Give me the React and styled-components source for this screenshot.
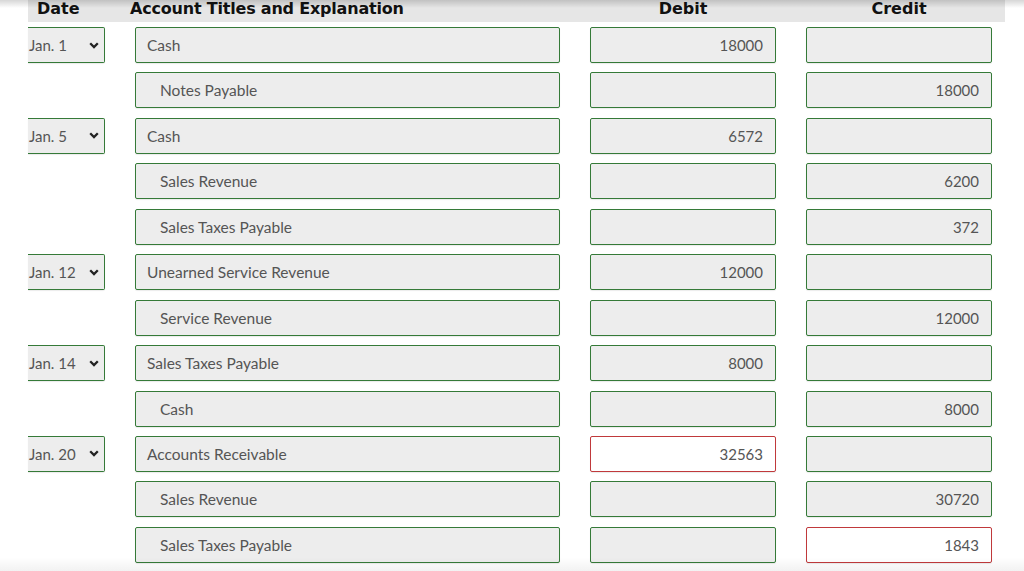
import React from "react";
import styled, { createGlobalStyle } from "styled-components";

const entries = [
  { date: "Jan. 1", lines: [
    { account: "Cash", debit: "18000", credit: "" },
    { account: "Notes Payable", indent: true, debit: "", credit: "18000" },
  ] },
  { date: "Jan. 5", lines: [
    { account: "Cash", debit: "6572", credit: "" },
    { account: "Sales Revenue", indent: true, debit: "", credit: "6200" },
    { account: "Sales Taxes Payable", indent: true, debit: "", credit: "372" },
  ] },
  { date: "Jan. 12", lines: [
    { account: "Unearned Service Revenue", debit: "12000", credit: "" },
    { account: "Service Revenue", indent: true, debit: "", credit: "12000" },
  ] },
  { date: "Jan. 14", lines: [
    { account: "Sales Taxes Payable", debit: "8000", credit: "" },
    { account: "Cash", indent: true, debit: "", credit: "8000" },
  ] },
  { date: "Jan. 20", lines: [
    { account: "Accounts Receivable", debit: "32563", debitWrong: true, credit: "" },
    { account: "Sales Revenue", indent: true, debit: "", credit: "30720" },
    { account: "Sales Taxes Payable", indent: true, debit: "", credit: "1843", creditWrong: true },
  ] },
];

export default function App() {
  return (
    <>
      <GlobalStyle />
      <Frame>
        <Journal>
          <HeaderRow>
            <DateHead>Date</DateHead>
            <AccountHead>Account Titles and Explanation</AccountHead>
            <AmountHead>Debit</AmountHead>
            <AmountHead>Credit</AmountHead>
          </HeaderRow>
          <Rows>
            {entries.map((entry) =>
              entry.lines.map((line, i) => (
                <React.Fragment key={entry.date + i}>
                  {i === 0 ? (
                    <DateSelect>
                      <span>{entry.date}</span>
                      <svg width="10" height="7" viewBox="0 0 10 7">
                        <path d="M1.2 1.3l3.8 3.8 3.8-3.8" fill="none" stroke="#222" strokeWidth="2.3" />
                      </svg>
                    </DateSelect>
                  ) : (
                    <span />
                  )}
                  <Field $indent={line.indent}>{line.account}</Field>
                  <Field $amount $wrong={line.debitWrong}>{line.debit}</Field>
                  <Field $amount $wrong={line.creditWrong}>{line.credit}</Field>
                </React.Fragment>
              ))
            )}
          </Rows>
        </Journal>
      </Frame>
    </>
  );
}

const GlobalStyle = createGlobalStyle`
  html, body {
    margin: 0;
    padding: 0;
    background: #ffffff;
  }
`;

const Frame = styled.div`
  position: relative;
  width: 1024px;
  height: 571px;
  overflow: hidden;
  background: #ffffff;
  padding-left: 28px;
  box-sizing: border-box;

  &::before,
  &::after {
    content: "";
    position: absolute;
    left: 0;
    right: 0;
    pointer-events: none;
  }
  &::before {
    top: 0;
    height: 8px;
    background: linear-gradient(rgba(0, 0, 0, 0.16), rgba(0, 0, 0, 0));
  }
  &::after {
    bottom: 0;
    height: 14px;
    background: linear-gradient(rgba(0, 0, 0, 0), rgba(0, 0, 0, 0.05));
  }
`;

const Journal = styled.div`
  width: 977px;
`;

const HeaderRow = styled.div`
  display: grid;
  grid-template-columns: 77px 425px 186px 186px;
  column-gap: 30px;
  height: 22px;
  align-items: start;
  background: #e6e6e6;
  font-family: "DejaVu Sans", Verdana, sans-serif;
  font-weight: bold;
  font-size: 16px;
  line-height: 18px;
  color: #111;
`;

const DateHead = styled.div`
  padding-left: 9px;
`;

const AccountHead = styled.div`
  margin-left: -5px;
  white-space: nowrap;
  letter-spacing: -0.2px;
`;

const AmountHead = styled.div`
  text-align: center;
`;

const Rows = styled.div`
  display: grid;
  grid-template-columns: 77px 425px 186px 186px;
  grid-auto-rows: 36px;
  column-gap: 30px;
  row-gap: 9.45px;
  padding-top: 5px;
`;

const Field = styled.div`
  box-sizing: border-box;
  height: 36px;
  display: flex;
  align-items: center;
  justify-content: ${(p) => (p.$amount ? "flex-end" : "flex-start")};
  padding: 0 12px 0 ${(p) => (p.$indent ? "24px" : "11px")};
  border: 1px solid ${(p) => (p.$wrong ? "#c0393b" : "#357a38")};
  border-radius: 2px;
  background: ${(p) => (p.$wrong ? "#ffffff" : "#ededed")};
  box-shadow: 0 1px 1px rgba(0, 0, 0, 0.08);
  font-family: Lato, "Liberation Sans", sans-serif;
  font-size: ${(p) => (p.$amount ? "15px" : "15.5px")};
  color: #555;
  white-space: nowrap;
`;

const DateSelect = styled.div`
  box-sizing: border-box;
  height: 36px;
  display: flex;
  align-items: center;
  justify-content: space-between;
  padding: 0 5px 0 1px;
  border: 1px solid #357a38;
  border-left: none;
  border-radius: 0 2px 2px 0;
  background: #ededed;
  box-shadow: 0 1px 1px rgba(0, 0, 0, 0.08);
  font-family: Lato, "Liberation Sans", sans-serif;
  font-size: 15px;
  color: #555;

  svg {
    display: block;
  }
`;
